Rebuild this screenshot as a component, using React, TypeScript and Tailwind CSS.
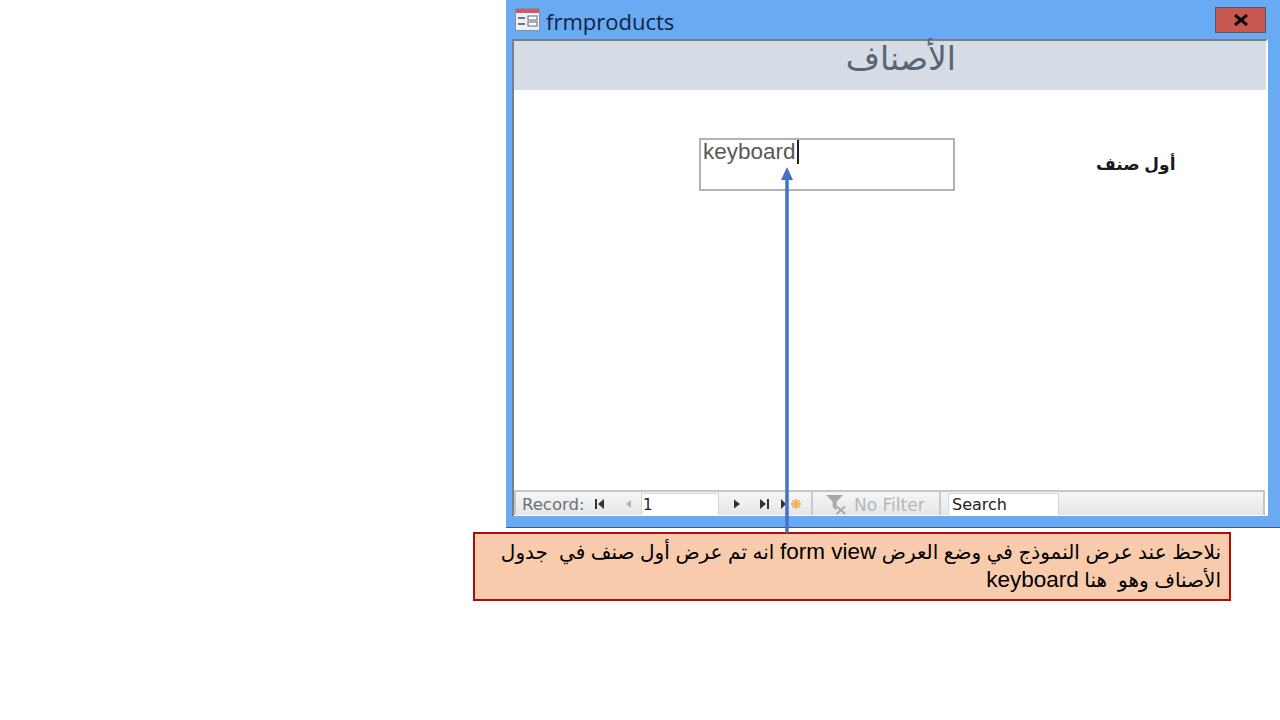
const arabic = "font-['Liberation_Sans','Noto_Sans','DejaVu_Sans',sans-serif]";

const TitleIcon = () => (
  <svg width="25" height="23" viewBox="0 0 25 23" className="shrink-0">
    <rect x="0.5" y="0.5" width="24" height="22" fill="#eef0f4" stroke="#8a8f9c" />
    <rect x="1" y="1" width="23" height="4" fill="#d0566e" />
    <rect x="3" y="9" width="7" height="2" fill="#6d7484" />
    <rect x="3" y="15" width="7" height="2" fill="#6d7484" />
    <rect x="13" y="8" width="9" height="4" fill="#fff" stroke="#5d6474" />
    <rect x="13" y="14" width="9" height="4" fill="#fff" stroke="#5d6474" />
  </svg>
);

const First = () => (
  <svg width="12" height="12" viewBox="0 0 12 12">
    <path d="M1 1h2v10H1zM10 1v10L4 6z" fill="#333" />
  </svg>
);
const Prev = () => (
  <svg width="12" height="12" viewBox="0 0 12 12">
    <path d="M9 2v8L4 6z" fill="#b4b4b4" />
  </svg>
);
const Next = () => (
  <svg width="12" height="12" viewBox="0 0 12 12">
    <path d="M3 1.500v9L9 6z" fill="#333" />
  </svg>
);
const Last = () => (
  <svg width="12" height="12" viewBox="0 0 12 12">
    <path d="M2 1v10l6-5zM9 1h2v10H9z" fill="#333" />
  </svg>
);
const NewRecord = () => (
  <svg width="24" height="14" viewBox="0 0 24 14">
    <path d="M1 2v10l5-5z" fill="#333" />
    <g stroke="#f0b35a" strokeWidth="1.800">
      <path d="M16 2v10M11 7h10M12.500 3.500l7 7M19.500 3.500l-7 7" />
    </g>
  </svg>
);
const NoFilter = () => (
  <svg width="24" height="21" viewBox="0 0 25 22">
    <path d="M1 1h18l-7 7v9l-4-3V8z" fill="#a9a9a9" />
    <path d="M12 13l9 8M21 13l-9 8" stroke="#a9a9a9" strokeWidth="2" />
  </svg>
);

export default function App() {
  return (
    <div className="relative w-[1280px] h-[720px] bg-white overflow-hidden">
      {/* access form window */}
      <div className="ml-[506px] w-[774px] h-[528px] bg-[#69aaf4] border-b border-[#3d5a80] flex flex-col">
        <div className="h-[39px] flex items-center pl-[9px] pr-[14px] shrink-0">
          <TitleIcon />
          <span className="ml-[6px] mt-[2px] text-[22px] leading-none text-[#10243e] font-['Open_Sans',sans-serif] flex-1">
            frmproducts
          </span>
          <div className="w-[51px] h-[26px] bg-[#c8574f] border border-[#54566a] flex items-center justify-center">
            <svg width="16" height="12" viewBox="0 0 16 12">
              <path d="M2 1l12 10M14 1L2 11" stroke="#0b0b0b" strokeWidth="3" />
            </svg>
          </div>
        </div>

        <div className="ml-[6px] mr-[12px] h-[477px] bg-white border-t-2 border-l-2 border-[#7a7f87] border-r-2 border-r-white flex flex-col">
          <div className="h-[49px] bg-[#d6dce5] flex items-center justify-end pr-[310px] shrink-0">
            <span dir="rtl" className={`${arabic} text-[33px] leading-none text-[#5a6472] -mt-[14px]`}>
              الأصناف
            </span>
          </div>

          <div className="flex-1 flex items-start pt-[48px] pl-[185px]">
            <div className="w-[256px] h-[53px] border-2 border-[#b2b2b2] pl-[2px] flex items-start shrink-0">
              <span className="text-[22.500px] leading-[24px] text-[#595959] font-['Liberation_Sans',sans-serif]">keyboard</span>
              <span className="w-[2px] h-[24px] bg-[#222] ml-[1px]" />
            </div>
            <span dir="rtl" className={`${arabic} ml-[141px] mt-[15px] text-[17px] leading-[24px] font-bold text-[#1a1a1a]`}>
              أول صنف
            </span>
          </div>

          <div className="h-[25px] mb-[1px] mr-[1px] bg-gradient-to-b from-[#f6f6f6] to-[#e4e6e8] border-t-2 border-x-2 border-[#c4c6c9] flex items-center text-[16.500px] leading-none font-['DejaVu_Sans',sans-serif] shrink-0">
            <span className="ml-[6px] w-[62px] mt-[3px] text-[#6a7078] whitespace-nowrap shrink-0">Record:</span>
            <span className="ml-[10px] w-[12px] flex shrink-0"><First /></span>
            <span className="ml-[16px] w-[12px] flex shrink-0"><Prev /></span>
            <span className="ml-[7px] w-[78px] h-[22px] mt-[1px] bg-white border-x border-t border-[#d6d6d6] text-[#222] pl-[1px] leading-[22px] text-[15px] shrink-0">1</span>
            <span className="ml-[12px] w-[12px] flex shrink-0"><Next /></span>
            <span className="ml-[15px] w-[12px] flex shrink-0"><Last /></span>
            <span className="ml-[10px] w-[24px] flex shrink-0"><NewRecord /></span>
            <span className="ml-[7px] w-[2px] h-full bg-[#c8cacc] shrink-0" />
            <span className="ml-[12px] mt-[1px] flex shrink-0"><NoFilter /></span>
            <span className="ml-[5px] w-[85px] mt-[3px] text-[17px] text-[#b4b8bc] whitespace-nowrap shrink-0">No Filter</span>
            <span className="w-[2px] h-full bg-[#c8cacc] shrink-0" />
            <span className="ml-[7px] w-[111px] h-[22px] mt-[1px] bg-white border-x border-t border-[#d6d6d6] text-[#222] pl-[3px] leading-[22px] text-[16px] shrink-0">Search</span>
          </div>
        </div>
      </div>

      {/* note under the window */}
      <div
        dir="rtl"
        className="mt-[4px] ml-[473px] w-[758px] h-[69px] bg-[#f8cbad] border-2 border-[#b00c0c] pr-[8px] pt-[4px] text-[20px] leading-[28px] text-black font-['Liberation_Sans','DejaVu_Sans',sans-serif] whitespace-pre"
      >
        <div>نلاحظ عند عرض النموذج في وضع العرض <span className="text-[22.500px]">form view</span> انه تم عرض أول صنف في  جدول</div>
        <div>الأصناف وهو  هنا <span className="text-[22.500px]">keyboard</span></div>
      </div>

      {/* arrow from the note to the text box */}
      <svg width="16" height="366" viewBox="0 0 16 366" className="absolute left-[779px] top-[167px]">
        <path d="M8 0l6 13H2z" fill="#4472c4" />
        <path d="M8 12v354" stroke="#4472c4" strokeWidth="3.500" />
      </svg>
    </div>
  );
}
